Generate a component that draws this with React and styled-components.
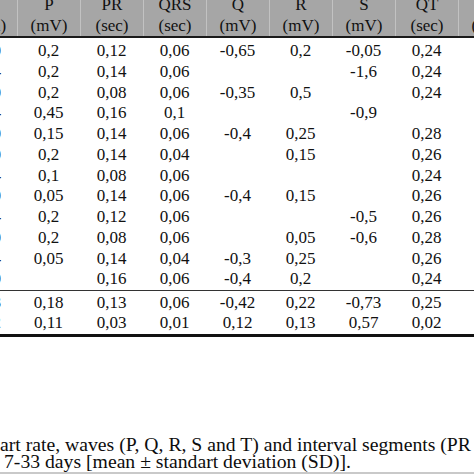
import styled, { createGlobalStyle } from "styled-components";

const GlobalStyle = createGlobalStyle`
  html, body {
    margin: 0;
    padding: 0;
    height: 474px;
    overflow: hidden;
    background: #ffffff;
  }
  body {
    font-family: "Liberation Serif", "Times New Roman", serif;
    color: #111111;
  }
`;

const columns = [
  { name: "FC", unit: "(bpm)" },
  { name: "P", unit: "(mV)" },
  { name: "PR", unit: "(sec)" },
  { name: "QRS", unit: "(sec)" },
  { name: "Q", unit: "(mV)" },
  { name: "R", unit: "(mV)" },
  { name: "S", unit: "(mV)" },
  { name: "QT", unit: "(sec)" },
  { name: "T", unit: "(mV)" },
];

const rows = [
  ["1800", "0,2", "0,12", "0,06", "-0,65", "0,2", "-0,05", "0,24", "0,1"],
  ["1714", "0,2", "0,14", "0,06", "", "", "-1,6", "0,24", "0,1"],
  ["1800", "0,2", "0,08", "0,06", "-0,35", "0,5", "", "0,24", "0,2"],
  ["1714", "0,45", "0,16", "0,1", "", "", "-0,9", "", "0,1"],
  ["1500", "0,15", "0,14", "0,06", "-0,4", "0,25", "", "0,28", "0,1"],
  ["1800", "0,2", "0,14", "0,04", "", "0,15", "", "0,26", "0,1"],
  ["1714", "0,1", "0,08", "0,06", "", "", "", "0,24", "0,1"],
  ["1500", "0,05", "0,14", "0,06", "-0,4", "0,15", "", "0,26", "0,1"],
  ["1714", "0,2", "0,12", "0,06", "", "", "-0,5", "0,26", "0,1"],
  ["1800", "0,2", "0,08", "0,06", "", "0,05", "-0,6", "0,28", "0,1"],
  ["1714", "0,05", "0,14", "0,04", "-0,3", "0,25", "", "0,26", "0,1"],
  ["1500", "", "0,16", "0,06", "-0,4", "0,2", "", "0,24", "0,1"],
];

const summary = [
  ["1698", "0,18", "0,13", "0,06", "-0,42", "0,22", "-0,73", "0,25", "0,1"],
  ["1212", "0,11", "0,03", "0,01", "0,12", "0,13", "0,57", "0,02", "0,0"],
];

export default function App() {
  return (
    <>
      <GlobalStyle />
      <Page>
        <Table>
          <HeadRow>
            {columns.map((c) => (
              <HeadCell key={c.name}>
                <span>{c.name}</span>
                <span>{c.unit}</span>
              </HeadCell>
            ))}
          </HeadRow>
          <Body>
            {rows.map((r, i) => (
              <Row key={i}>
                {r.map((v, j) => (
                  <Cell key={j}>{v}</Cell>
                ))}
              </Row>
            ))}
          </Body>
          <Summary>
            {summary.map((r, i) => (
              <Row key={i}>
                {r.map((v, j) => (
                  <Cell key={j}>{v}</Cell>
                ))}
              </Row>
            ))}
          </Summary>
        </Table>
        <Caption>
          <CaptionLine>art rate, waves (P, Q, R, S and T) and interval segments (PR</CaptionLine>
          <CaptionLine $indent>7-33 days [mean ± standart deviation (SD)].</CaptionLine>
        </Caption>
        <BottomStrip />
      </Page>
    </>
  );
}

const Page = styled.div`
  width: 474px;
  height: 474px;
  overflow: hidden;
  display: flex;
  flex-direction: column;
`;

const Table = styled.div`
  display: flex;
  flex-direction: column;
  margin-top: -6px;
  margin-left: -46px;
  width: 567px;
  font-size: 17px;
`;

const HeadRow = styled.div`
  display: grid;
  grid-template-columns: repeat(9, 63px);
  background: #a6a6a6;
  border-bottom: 2px solid #1a1a1a;
`;

const HeadCell = styled.div`
  display: flex;
  flex-direction: column;
  align-items: center;
  line-height: 21px;
  border-left: 1px solid #c2c2c2;
  &:first-child {
    border-left: none;
  }
`;

const Body = styled.div`
  padding-top: 3px;
`;

const Row = styled.div`
  display: grid;
  grid-template-columns: repeat(9, 63px);
  line-height: 20.75px;
`;

const Cell = styled.div`
  text-align: center;
  white-space: nowrap;
  &:first-child {
    padding-right: 3px;
  }
`;

const Summary = styled.div`
  border-top: 1.5px solid #333333;
  border-bottom: 3px solid #111111;
  padding-top: 1.5px;
`;

const Caption = styled.div`
  margin-top: 99px;
  display: flex;
  flex-direction: column;
  font-size: 19.7px;
  line-height: 17px;
  color: #0d0d0d;
`;

const CaptionLine = styled.div`
  white-space: nowrap;
  padding-left: ${(p) => (p.$indent ? "4px" : "0")};
`;

const BottomStrip = styled.div`
  margin-top: auto;
  height: 2px;
  background: #c9c9c9;
`;
